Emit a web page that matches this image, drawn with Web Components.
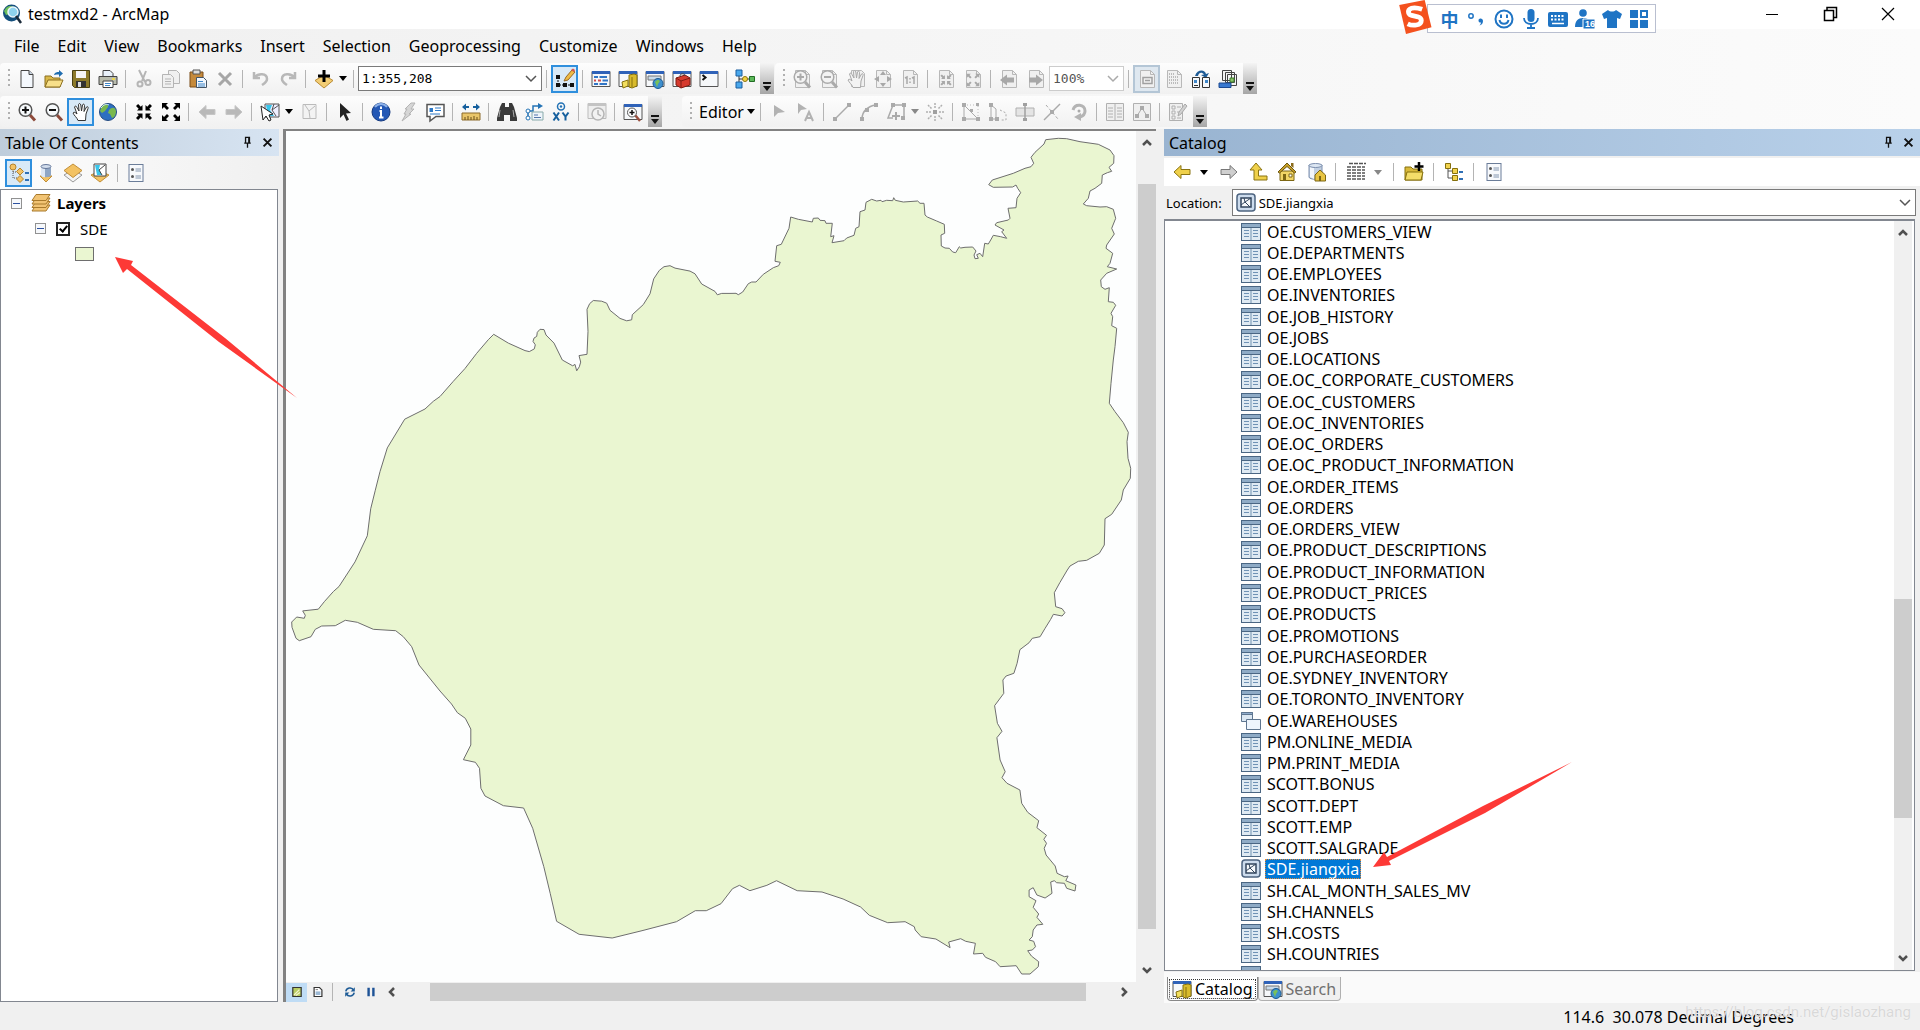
<!DOCTYPE html>
<html lang="en">
<head>
<meta charset="utf-8">
<title>testmxd2 - ArcMap</title>
<style>
  body {
    margin: 0;
    background: #f0f0f0;
    color: #000;
    font: 16px/20px "Noto Sans", "Noto Sans CJK SC", sans-serif;
  }
</style>
</head>
<body>
<am-app></am-app>

<script>
const PAGE = '<path d="M4 1.5h8l4 4v13H4z" fill="#f4f8fd" stroke="#444"/><path d="M12 1.5v4h4" fill="#c8d4e2" stroke="#444"/>';
const GPAGE = '<path d="M3.500 1.500h10l4 4v13h-14z" fill="#f0f0f0" stroke="#b8b8b8"/><path d="M13.500 1.500v4h4" fill="none" stroke="#b8b8b8"/>';
const WINDOW = '<path d="M1 2.500h18v15H1z" fill="#f6f8fa" stroke="#555"/><path d="M1 2h18v3H1z" fill="#2f62b8"/>';
const FORM = '<rect x="3" y="1.500" width="14" height="17" fill="#f7f9fc" stroke="#6b7d99"/><path d="M9.500 6H15M9.500 8H15M9.500 13H15M9.500 15H15" stroke="#8497b0"/><circle cx="6.500" cy="6.500" r="1.500" fill="#555"/><circle cx="6.500" cy="13.500" r="1.500" fill="#555"/>';
const ARROWS_IN = c => `<path fill="${c}" d="M8.500 3v5.500H3l1.700-1.700L2 4.100 4.100 2l2.700 2.700zM11.500 3v5.500H17l-1.700-1.700L18 4.100 15.900 2l-2.700 2.700zM8.500 17v-5.500H3l1.700 1.700L2 15.900 4.100 18l2.700-2.700zM11.500 17v-5.500H17l-1.700 1.700 2.700 2.700-2.100 2.100-2.700-2.700z"/>`;
const ARROWS_OUT = c => `<path fill="${c}" d="M1 1v6l2-2 3 3 2-2-3-3 2-2zM19 1v6l-2-2-3 3-2-2 3-3-2-2zM1 19v-6l2 2 3-3 2 2-3 3 2 2zM19 19v-6l-2 2-3-3-2 2 3 3-2 2z"/>`;
const LENS = (c, f) => `<path d="M13 13l5 5.500" stroke="${c === '#aaa' ? '#aaa' : '#8d4a3a'}" stroke-width="3"/><circle cx="8.500" cy="8" r="6.300" fill="${f}" stroke="${c}" stroke-width="1.500"/>`;
const HAND = (f, s) => `<path d="M7 18.500c-1-3-4-5-5-7.500 1-1.500 2.500-.5 4 1L3.500 5C4 3.500 5.500 4 6 5.500L8 9 7.500 2.500C8 1 9.500 1.500 9.800 3L10.500 9l1-6c.5-1.500 2-1 2 .5L13 9.500 15.500 5c1-1 2 0 1.500 1.500L15 12l-.5 6.500z" fill="${f}" stroke="${s}"/>`;
const LEFT = (f, s) => `<path d="M2 10l7-6.500v4h9v5H9v4z" fill="${f}" stroke="${s}"/>`;
const RIGHT = (f, s) => `<path d="M18 10l-7-6.500v4H2v5h9v4z" fill="${f}" stroke="${s}"/>`;
const CYLINDER = '<path d="M5 3v9c0 3 10 3 10 0V3z" fill="#8fa6c4"/><path d="M5 3v9c0 2 3 2.300 4 2.300V3z" fill="#dfe8f4"/><ellipse cx="10" cy="3.500" rx="5" ry="2" fill="#d3deed" stroke="#66789a"/>';

const ICONS = {
  app: '<circle cx="9.500" cy="9" r="8.500" fill="#144f7c"/><path d="M4 4c3-3 7-2 8 0l-3 2-1 4-4 1-2-4z" fill="#6dbf5a"/><circle cx="11" cy="8" r="5" fill="#8fd3ee" stroke="#eaf5fa" stroke-width="1.500"/><path d="M14 12l5 7" stroke="#1b2b3a" stroke-width="2.500"/>',
  new: PAGE,
  open: '<path d="M1 7h6l2 2h7v9H1z" fill="#d9b849" stroke="#8b6f20"/><path d="M4 11h15l-3 7H1z" fill="#f8e08a" stroke="#8b6f20"/><path d="M10 6c1-3 3-3 5-3V1l4 3.500L15 8V5.500c-2 0-3 0-5 .5z" fill="#1f6db0"/>',
  save: '<path d="M1.500 1.500h17v17h-15l-2-2z" fill="#8c7a2a" stroke="#4a4114"/><path d="M5 2h10v7H5z" fill="#f5f5f5"/><path d="M5 12h10v6H5z" fill="#333"/><path d="M7 13h3v5H7z" fill="#ddd"/>',
  print: '<path d="M5 7V1.500h7l3 3V7" fill="#eaf2fb" stroke="#444"/><path d="M1 7.500h18v8H1z" fill="#b9bcae" stroke="#444"/><path d="M5 12h10v6.500H5z" fill="#fff" stroke="#444"/><path d="M7 14.500h6M7 16.500h5" stroke="#3e86c8"/><path d="M14 9h3v2h-3z" fill="#ecd64f"/>',
  cut: '<g fill="none" stroke="#b5b5b5" stroke-width="2"><path d="M5 1l6 12M12 2L8 12"/><circle cx="6" cy="15" r="2.500"/><circle cx="14" cy="13.500" r="2.500"/></g>',
  copy: '<g fill="#f0f0f0" stroke="#b5b5b5"><path d="M7.500 1.500h8l3 3v10h-11z"/><path d="M1.500 5.500h8l3 3v10h-11z"/><path d="M4 10h6M4 12.500h6M4 15h6"/></g>',
  paste: '<path d="M2 3h13v15H2z" fill="#c58a3c" stroke="#7a4d18"/><path d="M5 1h7v4H5z" fill="#ddd" stroke="#555"/><path d="M8.500 8.500h7l3 3v7h-10z" fill="#f2f7fd" stroke="#456"/><path d="M10 12.500h5M10 15h7M10 17h7" stroke="#3e86c8"/>',
  delete: '<path d="M4 4l12 12M16 4L4 16" stroke="#a6a6a6" stroke-width="3"/>',
  undo: '<path d="M3 3v6h6M3.500 8.500C7 4 16 4 16 10c0 3-2 4-5 6" fill="none" stroke="#b8b8b8" stroke-width="2.500"/>',
  redo: '<path d="M17 3v6h-6M16.500 8.500C13 4 4 4 4 10c0 3 2 4 5 6" fill="none" stroke="#b8b8b8" stroke-width="2.500"/>',
  add: '<path d="M1 11.500L10 6l9 5.500-9 7.500z" fill="#f2cd74" stroke="#ba8b34"/><path d="M10 1v12M4 7h12" stroke="#000" stroke-width="3"/>',
  editor: '<path d="M3 8v8h14" fill="none" stroke="#111" stroke-dasharray="2 1"/><path d="M1 6h4v4H1zM1 14h4v4H1zM8 14h4v4H8zM15 14h4v4h-4z" fill="#111"/><path d="M9 12l2-4 6-7 3 2-7 8z" fill="#eebb45" stroke="#9a6a25"/><path d="M16 1l3 2 1-2-2-1.500z" fill="#d5544f"/>',
  contents: WINDOW + '<path d="M3 8h4M3 15h4" stroke="#3276c6" stroke-width="2"/><path d="M3 11.500h2M7 11.500h3" stroke="#d04a4a" stroke-width="2"/><path d="M8.500 8H16M11.500 11.500H17M8.500 15H16" stroke="#3276c6" stroke-width="2"/>',
  catalog: WINDOW + '<path d="M11 6l5-1 3 1v11l-5 2-3-1z" fill="#d9bb2c" stroke="#85700e"/><path d="M4 13l6-2v6l-5 2z" fill="#f3df5d" stroke="#85700e"/><path d="M14 8v10" stroke="#85700e"/>',
  search: WINDOW + '<path d="M3 7h13v4H3z" fill="#c9dbea" stroke="#777"/><circle cx="13" cy="14.500" r="5" fill="#3d8fce" stroke="#1b5a92"/><path d="M10 13c2-3 4-2 5-1l-2 3-1 3z" fill="#79c15b"/>',
  toolbox: WINDOW + '<path d="M4 9l9-3 5 3v7l-9 3-5-3z" fill="#d63a2d" stroke="#7e1c14"/><path d="M4 9l5 3 9-3M9 12v7" fill="none" stroke="#7e1c14"/><path d="M8 7c0-3 5-3 5 0" fill="none" stroke="#444"/>',
  python: WINDOW + '<path d="M3.500 6l3 2.500-3 2.500" fill="none" stroke="#111" stroke-width="2"/>',
  model: '<path d="M4 4v12M4 10h13" stroke="#333"/><path d="M1 1h6v6H1zM1 13h6v6H1z" fill="#4aa8ec" stroke="#1b5fa0"/><circle cx="10" cy="10" r="2.500" fill="#f3d33f" stroke="#8d7312"/><path d="M14.500 7.500h5v5h-5z" fill="#5cb85a" stroke="#226c24"/>',
  zoomin: LENS('#555', '#f7fafc') + '<path d="M8.500 4.500v7M5 8h7" stroke="#111" stroke-width="2"/>',
  zoomout: LENS('#555', '#f7fafc') + '<path d="M5 8h7" stroke="#111" stroke-width="2"/>',
  hand: HAND('#fff', '#333'),
  globe: '<circle cx="10" cy="10" r="8.500" fill="#2d6fc0" stroke="#234a80"/><path d="M4 4c3-3 7-2 6 1L7 9l-3 2-2-2zM11 8c3-3 6-3 7 1 0 4-2 7-4 7l-2-4-2-1z" fill="#79b84e"/><path d="M3 6c3-4 6-4 8-3" stroke="#d7ecff" fill="none"/>',
  fixedin: ARROWS_IN('#000'),
  fixedout: ARROWS_OUT('#000'),
  prev: LEFT('#b9b9b9', '#c6c6c6'),
  next: RIGHT('#b9b9b9', '#c6c6c6'),
  selectf: '<path d="M5 2h14v13H5z" fill="#eef" stroke="#555"/><path d="M6 3h6l-2 5 4 6H8z" fill="#39c5ea"/><path d="M19 3l-7 5 4 6M14 2l-2 6" fill="none" stroke="#555"/><path d="M1 4l2 14 3-4 3 5 2-1-2-5 4-1z" fill="#fff" stroke="#222"/>',
  clear: '<path d="M4 2.500h13v14H4z" fill="#f3f3f3" stroke="#bbb"/><path d="M6 3l4 6 6-5M10 9l1 7" fill="none" stroke="#bbb"/>',
  pointer: '<path d="M5 1l11 10-5 .5 3 6-2.500 1.500-3-6.500L5 16z" fill="#222"/>',
  info: '<circle cx="10" cy="10" r="9" fill="#2458b5" stroke="#153a80"/><path d="M4 5c3-4 9-4 12 0" stroke="#8db1e8" stroke-width="2" fill="none"/><path d="M10 4.500v2.500M8.500 9H10v6M8 15.500h4.500" stroke="#fff" stroke-width="2" fill="none"/>',
  bolt: '<path d="M13 1h4l-4 6h3l-5 5h2L4 19l4-7H6l3-5H7z" fill="#d6d6d6" stroke="#b4b4b4"/>',
  popup: '<path d="M2 2.500h17v12h-8L5 19v-4.500H2z" fill="#fff" stroke="#555" stroke-width="1.500"/><path d="M4.500 6H8v4H4.500z" fill="#2f7ac8"/><path d="M10 6h6M10 8.500h6M5 12h10" stroke="#2f7ac8"/>',
  measure: '<path d="M1 5l4-3.500v2.500h3v2H5v2.500zM19 5l-4-3.500v2.500h-3v2h3v2.500z" fill="#16609e"/><path d="M1 11h18v7H1z" fill="#e9c56a" stroke="#8c6a2a"/><path d="M4 15v3M7 14v4M10 15v3M13 14v4M16 15v3" stroke="#6b4f18"/>',
  find: '<path d="M3 5l2-4h3v4h4V1h3l2 4 3 11v3h-7v-6H7v6H0v-3z" fill="#3a3a3a"/><path d="M3 8l-1 7M16 8l1 7" stroke="#aaa"/>',
  route: '<path d="M4 16V9h5V4h6" fill="none" stroke="#2473b5" stroke-width="1.500"/><path d="M14 1l5 3-5 3z" fill="#2473b5"/><circle cx="4" cy="9" r="2" fill="#fff" stroke="#2473b5"/><circle cx="4" cy="16" r="2" fill="#fff" stroke="#2473b5"/><path d="M8 10h11v8H8z" fill="#eef4fa" stroke="#8aa"/><path d="M10 13h4M10 15.500h7" stroke="#57a"/>',
  xy: '<circle cx="10" cy="4.500" r="3.500" fill="none" stroke="#2473b5" stroke-width="1.500"/><circle cx="10" cy="4.500" r="1.200" fill="#2473b5"/><path d="M2.500 10.500l5.500 8M8 10.500l-5.500 8M11.500 10.500l3 4 3-4M14.500 14.500v4" fill="none" stroke="#16609e" stroke-width="2"/>',
  time: '<path d="M1 1.500h18v15H1z" fill="#eee" stroke="#bbb"/><path d="M1 1h18v3H1z" fill="#c4c4c4"/><circle cx="11" cy="12" r="6" fill="#f2f2f2" stroke="#b5b5b5" stroke-width="1.500"/><path d="M11 8v4l3 2" fill="none" stroke="#b5b5b5" stroke-width="1.500"/>',
  viewer: WINDOW + '<path d="M12 13l5 6" stroke="#9a5140" stroke-width="2.500"/><circle cx="9" cy="10.500" r="4.500" fill="#fff" stroke="#555"/><path d="M9 8v5M6.500 10.500h5" stroke="#111" stroke-width="1.500"/>',
  gzoomin: GPAGE + LENS('#aaa', '#f3f3f3') + '<path d="M8.500 4.500v7M5 8h7" stroke="#aaa" stroke-width="2"/>',
  gzoomout: GPAGE + LENS('#aaa', '#f3f3f3') + '<path d="M5 8h7" stroke="#aaa" stroke-width="2"/>',
  ghand: '<path d="M5.500 1.500h10l3 3v13h-13z" fill="#f0f0f0" stroke="#b8b8b8"/>' + HAND('#f3f3f3', '#a8a8a8'),
  gfull: GPAGE + '<path d="M10 2l3 4H7zM10 18l3-4H7zM1 10l5-3v6zM19 10l-5-3v6z" fill="#a8a8a8"/>',
  gone: GPAGE + '<path d="M5 9l2-1v7M12 9l2-1v7M10 9v1.500M10 12.500V14" fill="none" stroke="#a8a8a8" stroke-width="1.500"/>',
  gin: GPAGE + '<g transform="translate(3 4) scale(.7)">' + ARROWS_IN('#a8a8a8') + '</g>',
  gout: GPAGE + '<g transform="translate(3 4) scale(.7)">' + ARROWS_OUT('#a8a8a8') + '</g>',
  gprev: GPAGE + '<path d="M1 11l7-5.500v3h7v5H8v3z" fill="#a8a8a8"/>',
  gnext: GPAGE + '<path d="M17 11l-7-5.500v3H3v5h7v3z" fill="#a8a8a8"/>',
  draft: GPAGE + '<path d="M6 8.500h9v6H6zM8 11.500h5" fill="none" stroke="#a0a0a0" stroke-width="1.500"/>',
  focus: GPAGE + '<path d="M5 5h6M5 8h9M5 11h10M5 14h9" stroke="#bbb" stroke-width="2" stroke-dasharray="1 1"/>',
  layout: '<path d="M4 7C6 0 14 0 15 5l3-1-3 5-5-3 3-.5C11 3 8 3 7 7z" fill="#1d5b96"/><path d="M1.500 8.500h7v10h-7zM11.500 8.500h7v10h-7z" fill="#f4f8fc" stroke="#333"/><path d="M3 11h3v3H3zM14 11h3v3h-3z" fill="#3e86c8"/><path d="M3 16.500h4" stroke="#333"/>',
  pages: '<path d="M4.500 1.500h9v10h-9zM7.500 3.500h9v10h-9zM9.500 5.500h9v11h-9z" fill="#f4f4f4" stroke="#444"/><path d="M12 9h4v4h-4z" fill="#8bc46a" stroke="#3a7a2a"/><path d="M1 14h12v4.500H1z" fill="#3979d0" stroke="#1c4a92"/>',
  edit: '<path d="M5 3l11 7-7 1-4 4z" fill="#b2b2b2"/>',
  annot: '<path d="M2 1l9 6-6 1-3 4z" fill="#b2b2b2"/><path d="M9 19l4-9 4 9M10.500 16h5" fill="none" stroke="#b2b2b2" stroke-width="2"/>',
  line: '<path d="M3 17L17 3" stroke="#aaa" stroke-width="1.500"/><path d="M1 15h4v4H1zM15 1h4v4h-4z" fill="#aaa"/>',
  arc: '<path d="M3 17C3 9 9 4 17 3" fill="none" stroke="#aaa" stroke-width="1.500"/><path d="M1 15h4v4H1zM6 6h4v4H6zM15 1h4v4h-4z" fill="#aaa"/>',
  trace: '<path d="M7 3h11v13M7 3L2 16h5" fill="none" stroke="#aaa" stroke-width="1.500"/><path d="M5 1h4v4H5zM16 1h4v4h-4zM15 14h4v4h-4z" fill="#aaa"/><path d="M10 10v8M6 14h8" stroke="#aaa" stroke-width="2"/>',
  point: '<path d="M10 1v5M10 14v5M1 10h5M14 10h5M3 3l4 4M17 3l-4 4M3 17l4-4M17 17l-4-4" stroke="#b0b0b0" stroke-width="1.500" stroke-dasharray="2 1"/><path d="M8 8h4v4H8z" fill="#a0a0a0"/>',
  vertices: '<path d="M3 3v14h14zM3 3l14 14" fill="none" stroke="#aaa"/><path d="M3 3h14v14" fill="none" stroke="#bbb" stroke-dasharray="1 2"/><path d="M1 1h4v4H1zM1 15h4v4H1zM15 15h4v4h-4zM15 1h3v3h-3zM9 7h3v3H9z" fill="#aaa"/>',
  reshape: '<path d="M3 3v14h5V7z" fill="none" stroke="#aaa"/><path d="M3 3h4M12 8l6 3v7h-6" fill="none" stroke="#aaa" stroke-dasharray="2 2"/><path d="M1 1h4v4H1zM1 15h4v4H1zM7 15h4v4H7z" fill="#aaa"/>',
  cutpoly: '<path d="M1 6h18v8H1z" fill="#e4e4e4" stroke="#b0b0b0"/><path d="M10 1v18" stroke="#a0a0a0" stroke-width="1.500"/><path d="M8 1h4v3H8zM8 16h4v3H8z" fill="#a0a0a0"/>',
  split: '<path d="M2 18L18 2" stroke="#aaa" stroke-width="1.500"/><path d="M4 3l12 14" stroke="#aaa" stroke-dasharray="3 2"/><path d="M8 8h4v4H8z" fill="#aaa"/>',
  rotate: '<path d="M4 8c2-7 12-6 12 1 0 3-2 5-5 6" fill="none" stroke="#b4b4b4" stroke-width="3"/><path d="M5 15l7-4v8z" fill="#b4b4b4"/><circle cx="10" cy="9" r="1.500" fill="#aaa"/>',
  attrs: '<path d="M1.500 1.500h17v17h-17zM10 2v17" fill="#efefef" stroke="#b0b0b0"/><path d="M3 6h5M3 9h5M3 12h5M3 15h5M12 6h5M12 9h5M12 12h5M12 15h5" stroke="#b0b0b0"/>',
  sketch: '<path d="M1.500 1.500h17v17h-17z" fill="#efefef" stroke="#b0b0b0"/><path d="M5 14l5-8 5 8" fill="none" stroke="#aaa"/><path d="M3 12h4v4H3zM8 4h4v4H8zM13 12h4v4h-4z" fill="#aaa"/>',
  create: '<path d="M1.500 1.500h13v17h-13z" fill="#efefef" stroke="#b0b0b0"/><path d="M4 4h3v3H4zM4 9h3v3H4zM4 14h3v3H4zM9 5h4M9 10h3M9 16h4" fill="none" stroke="#b0b0b0"/><path d="M10 14l1-4 6-8 2 2-6 8z" fill="#d2d2d2" stroke="#aaa"/>',
  drawing: '<path d="M4 4v11h8M4 9h7" fill="none" stroke="#555" stroke-dasharray="1 1"/><g fill="#f3c263" stroke="#b58430"><circle cx="4" cy="4" r="3"/><path d="M11 5l3.500 3.500L11 12 7.500 8.500zM11 12.500l3.500 3.500-3.500 3.500-3.500-3.500z"/></g><path d="M16 10h4M16 17h4" stroke="#2f6fb5" stroke-width="2"/>',
  source: '<path d="M4 13l6 6 6-6z" fill="#f3c263" stroke="#c28f38"/>' + CYLINDER,
  visible: '<path d="M1 12l9-5 9 5-9 7z" fill="#f4f4f4" stroke="#999"/><path d="M1 7.500L10 1l9 6.500-9 7z" fill="#f3c263" stroke="#c28f38"/>',
  selection: '<path d="M1 12l9-4 9 4-9 7z" fill="#f3c263" stroke="#c28f38"/><path d="M4 1h12v12H4z" fill="#fff" stroke="#444"/><path d="M5 2h5l-1 4 3 6H7z" fill="#39c5ea"/><path d="M15 2l-6 5 3 5" fill="none" stroke="#444"/>',
  options: FORM,
  layers: '<g fill="#f1c373" stroke="#a97a2c"><path d="M5 12h14l-4 6H1z"/><path d="M5 8.500h14l-4 6H1z"/><path d="M5 5h14l-4 6H1z"/><path d="M5 1.500h14l-4 6H1z"/></g>',
  back: LEFT('#efd04a', '#8a7412'),
  forward: RIGHT('#cfcfcf', '#777'),
  up: '<path d="M8 1l6 7h-3.500v6H19v4H6V8H2z" fill="#efd04a" stroke="#8a7412"/>',
  home: '<path d="M3 9h14v9.500H3z" fill="#f1d566" stroke="#7d6714"/><path d="M10 1l9 9-1.500 1L10 4.500 2.500 11 1 10z" fill="#c59e27" stroke="#6d5710"/><path d="M14 1h2.500v5L14 4z" fill="#8a6a1a"/><path d="M6 12h3v6H6z" fill="#7d6714"/><path d="M12 12h3v3h-3z" fill="#fff" stroke="#7d6714"/>',
  dbhome: '<path d="M3 3v12c0 3 13 3 13 0V3z" fill="#c2d0e2" stroke="#7c8fae"/><path d="M4 4v11l4 2V4z" fill="#f2f6fb"/><ellipse cx="9.500" cy="3.500" rx="6.500" ry="2" fill="#dce6f2" stroke="#7c8fae"/><path d="M9 13l5-5 5.500 5v6H9z" fill="#e8c442" stroke="#7d6714"/><path d="M13 14h2v5h-2z" fill="#7d6714"/>',
  details: '<path d="M3 1.500h17M1 5h18M1 8h18M1 11h18M1 14h18M1 17h18" stroke="#555" stroke-width="1.500" stroke-dasharray="4 1"/>',
  connect: '<path d="M1 5h6l2 2h9v11H1z" fill="#d9b93a" stroke="#85700e"/><path d="M3 10h16l-2 8H1z" fill="#f4dd69" stroke="#85700e"/><path d="M15 0v9M10.500 4.500h9" stroke="#000" stroke-width="2.500"/>',
  tree: '<path d="M4 4v12h5M4 9h5" fill="none" stroke="#555"/><path d="M1.500 1.500h5v5h-5zM8.500 6.500h5v5h-5zM8.500 13.500h5v5h-5z" fill="#f2d34e" stroke="#85700e"/><path d="M15 10h4M15 17h4" stroke="#2f6fb5" stroke-width="2"/>',
  table: '<rect x="0" y="1" width="20" height="18" fill="#4a6683"/><path d="M1 2h18v3H1z" fill="#8fabc6"/><path d="M1 6h18v12H1z" fill="#dfeaf3"/><path d="M10 6v12" stroke="#a9bfd2" stroke-width="2"/><path d="M3 8.500h5M3 11.500h5M3 14.500h5M12 8.500h5M12 11.500h5M12 14.500h5" stroke="#6f92b5"/>',
  view: '<g stroke="#5f7690"><path d="M.5 1.500h11v9H.5z" fill="#dce8f3"/><path d="M.5 1.500h11v2H.5z" fill="#8faccc"/><path d="M5.500 8.500h14v10h-14z" fill="#eef5fd"/></g>',
  feature: '<rect x="1" y="1" width="18" height="17" rx="3" fill="#cddced" stroke="#4d6480" stroke-width="1.500"/><path d="M5 5h10v9H5z" fill="#f7fafc" stroke="#33465e" stroke-width="1.500"/><path d="M5 12l4-3 6-4M9 9l5 5M8 5l1 4" fill="none" stroke="#33465e"/>',
  dataview: '<path d="M3 2.500h14v15H3z" fill="#b8cc62" stroke="#333" stroke-width="2"/><path d="M5 15l9-9M8 16l7-5" stroke="#f4f4d0" stroke-width="2"/>',
  pageview: '<path d="M3.500 2.500h9l4 4v11h-13z" fill="#fff" stroke="#333" stroke-width="2"/><path d="M6 9h8v6H6z" fill="#9bb8d4"/><path d="M6 6h4" stroke="#333"/>',
  refresh: '<g fill="none" stroke="#1d5b96" stroke-width="2.500"><path d="M3 9c1-6 10-8 13-2M17 11c-1 6-10 8-13 2"/></g><path d="M18 2v7h-7zM2 18v-7h7z" fill="#1d5b96"/>',
  pause: '<path d="M4 3h4v14H4zM12 3h4v14h-4z" fill="#1d5296"/>',
  pin: '<path d="M7 2h6v9H7zM5 11h10M10 11v7M12 2v9" fill="none" stroke="#111" stroke-width="2"/>',
  close: '<path d="M4 4l12 12M16 4L4 16" stroke="#111" stroke-width="3"/>',
  winmin: '<path d="M4 10.500h12" stroke="#000"/>',
  winmax: '<path d="M4.500 6.500h9v10h-9zM7 6V3.500h9.500v10H14" fill="none" stroke="#000" stroke-width="1.500"/>',
  winclose: '<path d="M4 4l12 12M16 4L4 16" stroke="#000" stroke-width="1.200"/>',
  sogou: '<path d="M1 3L16 0l4 16-15 4z" fill="#f4511e"/><path d="M14.500 5.500C9 3.500 6 5 6.500 7.500 7 10.500 14 8.500 14 12c0 3-5 3.500-8 2" fill="none" stroke="#fff" stroke-width="2.800"/>',
  punct: '<circle cx="4" cy="7" r="2.200" fill="none" stroke="currentColor" stroke-width="1.500"/><path d="M13 9.500a2.500 2.500 0 0 1 3 2.500c0 3-2 4-3.500 4.500 1-1 1.500-2 1.500-3a2 2 0 0 1-1-4z" fill="currentColor"/>',
  smile: '<circle cx="10" cy="10" r="8.500" fill="none" stroke="currentColor" stroke-width="2"/><path d="M7 5.500V9M13 5.500V9M5.500 11c1 5 8 5 9 0" fill="none" stroke="currentColor" stroke-width="2"/>',
  mic: '<rect x="6.500" y="0" width="7" height="13" rx="3.500" fill="currentColor"/><path d="M3 9c0 8 14 8 14 0M10 15v4M6 19h8" fill="none" stroke="currentColor" stroke-width="1.800"/>',
  keyboard: '<rect x="0" y="3" width="20" height="15" rx="2" fill="currentColor"/><path d="M3 7h14M3 10.500h14" stroke="#fff" stroke-width="1.800" stroke-dasharray="2 1.500"/><path d="M4 14.500h12" stroke="#fff" stroke-width="1.500"/>',
  person: '<circle cx="8" cy="4" r="3.800" fill="currentColor"/><path d="M0 18c0-6 3-9 8-9s6 2 7 4v5z" fill="currentColor"/><path d="M8 10h12v10H8z" fill="currentColor" stroke="#fff"/>',
  shirt: '<path d="M6 1c2 2 6 2 8 0l6 4-2 5-3-1v10H5V9L2 10 0 5z" fill="currentColor"/>',
  apps: '<path d="M1 1h8v8H1zM1 11h8v8H1zM11 11h8v8h-8z" fill="currentColor"/><path d="M12 2h6v6h-6z" fill="none" stroke="currentColor" stroke-width="2"/>',
};

class AmElement extends HTMLElement {
  constructor() {
    super();
    this.attachShadow({ mode: 'open' });
  }

  connectedCallback() {
    this.shadowRoot.innerHTML = this.template();
  }
}

class AmIcon extends AmElement {
  template() {
    return `
      <style>
        :host { display: block; width: 20px; height: 20px; flex: none; }
        svg { display: block; width: 100%; height: 100%; overflow: visible; }
      </style>
      <svg viewBox="0 0 20 20" fill="none" aria-hidden="true">${ICONS[this.getAttribute('name')]}</svg>
    `;
  }
}
customElements.define('am-icon', AmIcon);

class AmTool extends AmElement {
  template() {
    const caret = this.hasAttribute('caret');
    return `
      <style>
        :host { display: flex; flex: none; }
        button {
          display: flex; align-items: center; justify-content: center;
          box-sizing: border-box; width: 27px; height: 28px; padding: 0;
          border: 1px solid transparent; background: none; color: inherit; font: inherit;
        }
        :host([pressed]) button:first-of-type { border: 2px solid #2f8fdd; background: #d8e9f7; }
        :host([draft]) button:first-of-type { border: 2px solid #b4c6d6; background: #dfe8f0; }
        .caret { width: var(--caret-width, 12px); }
        .caret::after {
          content: ""; border: 5px solid transparent; border-top-color: #000;
          border-bottom: 0; border-left-width: 4px; border-right-width: 4px;
        }
        :host([dim]) .caret::after { border-top-color: #888; }
      </style>
      <button aria-label="${this.getAttribute('label')}"><am-icon name="${this.getAttribute('icon')}"></am-icon></button>
      ${caret ? `<button class="caret" aria-label="${this.getAttribute('label')} menu"></button>` : ''}
    `;
  }
}
customElements.define('am-tool', AmTool);

class AmSep extends AmElement {
  template() {
    return `
      <style>
        :host { display: block; flex: none; width: 1px; height: 18px; margin: 0 4px; background: #b4b4b4; }
      </style>
    `;
  }
}
customElements.define('am-sep', AmSep);

class AmToolbar extends AmElement {
  template() {
    return `
      <style>
        :host { display: flex; align-items: stretch; height: 31px; }
        .body {
          display: flex; align-items: center; padding: 0 2px 0 8px;
          border-radius: 4px 0 0 4px; background: linear-gradient(#fdfdfd, #f1f1f1);
        }
        .grip { width: 2px; height: 20px; margin-right: 3px; background: repeating-linear-gradient(#b0b0b0 0 2px, transparent 2px 5px); }
        .more {
          display: flex; flex-direction: column; align-items: center; justify-content: flex-end; gap: 2px;
          width: 14px; padding: 0 0 3px; border: 0; background: linear-gradient(#f4f4f4, #a6a6a6);
        }
        .more::before { content: ""; width: 8px; height: 2px; background: #111; }
        .more::after { content: ""; border: 4px solid transparent; border-top: 5px solid #111; border-bottom: 0; }
      </style>
      <div class="body" role="toolbar"><span class="grip"></span><slot></slot></div>
      <button class="more" aria-label="Toolbar options"></button>
    `;
  }
}
customElements.define('am-toolbar', AmToolbar);

class AmCombo extends AmElement {
  template() {
    return `
      <style>
        :host { display: flex; position: relative; align-items: center; box-sizing: border-box; height: 25px; border: 1px solid #7a7a7a; background: #fff; }
        :host([dim]) { border-color: #ccc; color: #555; }
        select {
          appearance: none; flex: 1; min-width: 0; height: 100%; padding: 0 26px 0 3px;
          border: 0; border-radius: 0; background: none; color: inherit; font: inherit;
        }
        svg { position: absolute; right: 4px; top: 50%; width: 12px; height: 8px; margin-top: -4px; pointer-events: none; }
      </style>
      <slot></slot>
      <select aria-label="${this.getAttribute('label')}"><option>${this.getAttribute('value')}</option></select>
      <svg viewBox="0 0 12 8"><path d="M1 1l5 5 5-5" fill="none" stroke="${this.hasAttribute('dim') ? '#aaa' : '#555'}" stroke-width="1.500"/></svg>
    `;
  }
}
customElements.define('am-combo', AmCombo);

class AmPanel extends AmElement {
  template() {
    return `
      <style>
        :host { display: flex; flex-direction: column; min-width: 0; min-height: 0; }
        header {
          display: flex; align-items: center; height: 27px; padding: 0 1px 0 5px;
          background: linear-gradient(90deg, #bfcddb, #d7e4f2);
        }
        :host([active]) header { background: linear-gradient(90deg, #99b4d1, #b9d1ea); }
        h2 { flex: 1; margin: 0; font-size: 16px; font-weight: 400; }
        button { width: 20px; padding: 0 3px; border: 0; background: none; }
        am-icon { width: 13px; height: 13px; }
      </style>
      <header>
        <h2>${this.getAttribute('heading')}</h2>
        <button aria-label="Auto hide"><am-icon name="pin"></am-icon></button>
        <button aria-label="Close"><am-icon name="close"></am-icon></button>
      </header>
      <slot></slot>
    `;
  }
}
customElements.define('am-panel', AmPanel);

// from / to place the thumb, in percent of the space between the two arrows
class AmScrollbar extends AmElement {
  template() {
    const from = Number(this.getAttribute('from'));
    const to = Number(this.getAttribute('to'));
    const across = this.hasAttribute('horizontal');
    const arrow = d => `<svg viewBox="0 0 18 18"><path d="${d}" fill="none" stroke="#505050" stroke-width="2.500"/></svg>`;
    return `
      <style>
        :host { display: flex; flex: none; flex-direction: column; box-sizing: border-box; width: 18px; padding: 3px 0; background: #f0f0f0; }
        :host([horizontal]) { flex: 1; flex-direction: row; width: auto; height: 18px; padding: 0 2px; }
        button { flex: none; width: 18px; height: 18px; padding: 0; border: 0; background: none; }
        svg { display: block; width: 18px; height: 18px; }
        .track { display: flex; flex: 1; flex-direction: inherit; }
        .before { flex: ${from}; }
        .thumb { flex: ${to - from}; background: #cdcdcd; }
        .after { flex: ${100 - to}; }
      </style>
      <button aria-label="Back">${arrow(across ? 'M11 5L7 9l4 4' : 'M5 11l4-4 4 4')}</button>
      <div class="track"><span class="before"></span><span class="thumb"></span><span class="after"></span></div>
      <button aria-label="Forward">${arrow(across ? 'M7 5l4 4-4 4' : 'M5 7l4 4 4-4')}</button>
    `;
  }
}
customElements.define('am-scrollbar', AmScrollbar);

class AmTitlebar extends AmElement {
  template() {
    return `
      <style>
        :host { display: flex; align-items: center; box-sizing: border-box; height: 29px; padding: 0 0 1px 2px; background: #fff; }
        h1 { flex: 1; margin: 0 0 0 6px; font-size: 16px; font-weight: 400; }
        button { display: flex; justify-content: center; width: 58px; padding: 0; border: 0; background: none; }
        nav { display: flex; padding-right: 3px; }
      </style>
      <am-icon name="app"></am-icon>
      <h1>testmxd2 - ArcMap</h1>
      <nav>
        <button aria-label="Minimize"><am-icon name="winmin"></am-icon></button>
        <button aria-label="Restore"><am-icon name="winmax"></am-icon></button>
        <button aria-label="Close"><am-icon name="winclose"></am-icon></button>
      </nav>
    `;
  }
}
customElements.define('am-titlebar', AmTitlebar);

class AmIme extends AmElement {
  template() {
    const keys = ['punct', 'smile', 'mic', 'keyboard', 'person', 'shirt', 'apps'];
    return `
      <style>
        :host { display: flex; position: absolute; top: 0; right: 264px; color: #1f74c4; }
        .logo { position: relative; width: 35px; height: 34px; margin-right: -5px; }
        .bar { display: flex; align-items: center; margin-top: 4px; padding: 0 3px 0 8px; height: 27px; border: 1px solid #b9bfd0; background: #fff; }
        button { display: flex; position: relative; align-items: center; justify-content: center; width: 27px; padding: 0; border: 0; background: none; color: inherit; font: bold 18px/24px "Noto Sans CJK SC", sans-serif; }
        small { position: absolute; right: 3px; bottom: 0; color: #fff; font: bold 9px/9px "Liberation Sans", sans-serif; }
      </style>
      <am-icon class="logo" name="sogou"></am-icon>
      <div class="bar">
        <button>中</button>
        ${keys.map(k => `<button aria-label="${k}"><am-icon name="${k}"></am-icon>${k === 'person' ? '<small>16</small>' : ''}</button>`).join('')}
      </div>
    `;
  }
}
customElements.define('am-ime', AmIme);

class AmMenubar extends AmElement {
  template() {
    const items = ['File', 'Edit', 'View', 'Bookmarks', 'Insert', 'Selection', 'Geoprocessing', 'Customize', 'Windows', 'Help'];
    return `
      <style>
        :host { display: flex; gap: 18px; align-items: center; box-sizing: border-box; height: 34px; padding: 0 14px; }
        button { padding: 0; border: 0; background: none; color: inherit; font: inherit; }
      </style>
      ${items.map(i => `<button>${i}</button>`).join('')}
    `;
  }
}
customElements.define('am-menubar', AmMenubar);

const tools = names => names.split(' ').map(n => {
  if (n === '|') return '<am-sep></am-sep>';
  const [icon, ...flags] = n.split(':');
  return `<am-tool icon="${icon}" label="${icon}" ${flags.join(' ')}></am-tool>`;
}).join('');

class AmToolbars extends AmElement {
  template() {
    return `
      <style>
        :host { display: flex; flex-direction: column; gap: 2px; padding-bottom: 2px; }
        .row { display: flex; }
        am-combo { font: 13px "DejaVu Sans Mono", monospace; }
        .scale { width: 184px; }
        .percent { width: 75px; }
        .layout { margin-left: 1px; }
        .edit { margin-left: 20px; }
        .menu { display: flex; align-items: center; gap: 3px; width: 61px; padding: 0 0 0 4px; border: 0; background: none; color: inherit; font: inherit; }
        .menu::after { content: ""; border: 4px solid transparent; border-top: 5px solid #000; border-bottom: 0; }
      </style>
      <div class="row">
        <am-toolbar>
          ${tools('new open save print | cut copy paste delete | undo redo | add:caret |')}
          <am-combo class="scale" label="Map scale" value="1:355,208"></am-combo>
          ${tools('| editor:pressed | contents catalog search toolbox python | model')}
        </am-toolbar>
        <am-toolbar class="layout">
          ${tools('gzoomin gzoomout ghand gfull gone | gin gout | gprev gnext')}
          <am-combo class="percent" dim label="Page zoom" value="100%"></am-combo>
          ${tools('| draft:draft focus layout pages')}
        </am-toolbar>
      </div>
      <div class="row">
        <am-toolbar>
          ${tools('zoomin zoomout hand:pressed globe | fixedin fixedout | prev next | selectf:caret clear | pointer | info bolt popup | measure | find route xy | time | viewer')}
        </am-toolbar>
        <am-toolbar class="edit">
          <button class="menu">Editor</button>
          ${tools('| edit annot | line arc trace:caret:dim point | vertices reshape cutpoly split rotate | attrs sketch | create')}
        </am-toolbar>
      </div>
    `;
  }
}
customElements.define('am-toolbars', AmToolbars);

class AmContents extends AmElement {
  template() {
    return `
      <style>
        :host { display: flex; flex: 1; flex-direction: column; min-height: 0; }
        .tools { display: flex; align-items: center; height: 33px; padding-left: 5px; background: linear-gradient(90deg, #fdfdfd, #f0f0f0); }
        .tree { flex: 1; margin: 0 1px 1px 0; padding: 0 10px; border: 1px solid #828790; background: #fff; font-size: 15px; }
        .item { display: flex; align-items: center; height: 26px; }
        .sub { height: 25px; padding-left: 24px; }
        .symbol { width: 17px; height: 12px; margin-left: 64px; border: 1px solid #6e6e6e; background: #eaf6d1; }
        .fold { position: relative; width: 11px; height: 11px; padding: 0; border: 1px solid #919191; background: #f6f8fb; }
        .fold::after { content: ""; display: block; height: 1px; margin: 0 1px; background: #2b50a0; }
        am-icon { margin: 0 6px 0 9px; }
        label { display: flex; align-items: center; gap: 10px; margin-left: 10px; }
        input { appearance: none; width: 14px; height: 14px; margin: 0; border: 2px solid #222; background: #fff; }
        input:checked::after { content: ""; display: block; width: 3px; height: 6px; margin: 0 0 0 3px; border: solid #000; border-width: 0 2px 2px 0; transform: rotate(40deg); }
      </style>
      <div class="tools">${tools('drawing:pressed source visible selection | options')}</div>
      <div class="tree" role="tree">
        <div class="item"><button class="fold" aria-label="Collapse Layers"></button><am-icon name="layers"></am-icon><b>Layers</b></div>
        <div class="item sub"><button class="fold" aria-label="Collapse SDE"></button><label><input type="checkbox" checked>SDE</label></div>
        <div class="item"><span class="symbol"></span></div>
      </div>
    `;
  }
}
customElements.define('am-contents', AmContents);

// Boundary of the layer, clockwise from the western tip. Each sheet has its own origin and scale.
const SHEETS = [
  { x: -6, y: -11, sx: 3, sy: 2.958, pts: '35,1485 50,1470 73,1474 76,1465 68,1452 115,1447 133,1425 160,1395 177,1380 225,1307 262,1230 272,1150 286,1095 300,1040 322,970 374,885 435,855 460,832 480,818 520,773 555,735 590,690 625,650 641,634 685,660 735,682 748,685 763,677 766,665 759,655 762,645 770,640 772,628 780,619 792,620 798,636 822,660 847,710 878,727 885,723 890,742 898,730 902,716 897,697 921,693 924,625 921,560 929,543 940,534 965,536 980,542 990,563 1020,587 1040,594 1055,591 1057,576 1090,546 1110,514 1121,470 1138,445 1152,434 1170,431 1185,438 1230,447 1245,455 1265,485 1305,507 1312,517 1325,513 1350,513' },
  { x: 444, y: -11, sx: 3, sy: 3, pts: '18,520 25,524 38,516 55,491 65,486 78,486 100,463 130,443 146,437 151,427 135,424 140,377 154,373 177,325 182,291 205,298 247,306 250,295 265,294 270,301 285,302 288,310 307,310 302,350 312,347 306,368 342,362 350,354 372,346 377,325 387,320 390,275 405,270 408,247 425,238 440,243 453,241 456,245 470,241 488,242 491,233 496,241 520,246 563,243 570,250 582,250 585,285 592,291 620,303 643,313 644,340 633,345 634,378 645,384 658,385 668,396 677,398 688,380 692,384 705,382 728,381 738,393 732,405 735,416 745,415 740,404 750,400 758,410 764,370 775,372 782,360 790,346 812,350 830,355 815,335 822,330 795,315 800,308 835,300 840,295 834,265 858,263 861,235 872,218 863,205 858,195 848,201 790,202 776,194 787,180 850,160 885,145 903,140 911,130 903,112 915,97 942,72 947,59 985,55 1010,56 1050,65 1105,73 1140,90 1152,107 1151,130 1137,142 1145,154 1132,158 1117,165 1115,190 1095,205 1080,213 1075,235 1060,252 1070,257 1110,261 1130,260 1150,268 1157,295 1145,325 1153,342 1130,375 1128,385 1148,400 1140,430 1132,440 1160,447 1130,460 1112,480 1114,500 1125,508 1138,503 1135,545 1150,547 1157,556 1143,580 1148,590 1145,617 1160,625 1155,680 1150,720 1143,790 1138,850 1155,875 1180,908 1195,937 1191,965 1194,1015 1202,1045 1201,1075 1180,1110 1174,1140 1145,1183 1125,1196 1123,1275 1108,1300 1070,1321 1045,1324 1020,1338 1012,1350' },
  { x: 154, y: 429, sx: 2.178, sy: 3, pts: '1350,68 1338,98 1341,140 1355,146 1361,158 1355,168 1336,163 1330,178 1318,205 1307,230 1290,235 1283,248 1263,269 1257,310 1250,340 1233,348 1226,360 1228,400 1208,437 1214,490 1224,514 1213,533 1220,600 1231,635 1224,653 1235,670 1263,690 1267,730 1280,757 1304,782 1300,803 1321,826 1315,838 1321,850 1316,865 1320,885 1340,918 1344,940 1360,950 1368,948 1363,962 1385,975 1383,993 1365,985 1360,970 1343,968 1338,962 1330,966 1333,1000 1318,1014 1300,1005 1292,983 1283,990 1283,1010 1298,1022 1292,1042 1304,1062 1300,1072 1305,1080 1313,1093 1300,1095 1292,1110 1290,1130 1283,1140 1293,1144 1297,1160 1290,1170 1280,1172 1288,1188 1304,1205 1303,1220 1285,1242 1267,1242 1255,1217 1220,1220 1210,1205 1188,1192 1182,1180 1162,1182 1166,1150 1145,1144 1134,1136 1108,1146 1111,1163 1080,1137 1048,1130 1035,1110 1033,1100 1013,1085 975,1088 935,1066 916,1041 878,1017 832,996 778,992 733,962 712,976 675,992 652,976 637,986 612,1031 580,1052 556,1052 515,1085 440,1112 375,1134 303,1123 254,1084 240,1000 226,920 202,805 182,744 138,737 98,708 89,685 86,625 77,607 51,599 67,555 67,507 55,475 38,458 25,432 0,393' },
  { x: -286, y: 439, sx: 3, sy: 3, pts: '1257,285 1235,230 1210,200 1187,182 1120,178 1072,157 1036,151 1006,167 965,168 946,178 933,200 898,212 888,205 876,172' },
];

const outline = () => SHEETS.flatMap(s => s.pts.split(' ').map(p => {
  const [x, y] = p.split(',').map(Number);
  return `${(s.x + x / s.sx).toFixed(1)},${(s.y + y / s.sy).toFixed(1)}`;
})).join(' ');

class AmMap extends AmElement {
  template() {
    return `
      <style>
        :host {
          display: grid; grid-template: minmax(0, 1fr) 20px / minmax(0, 1fr) 18px; column-gap: 2px;
          border: solid #828282; border-width: 2px 0 0 3px; background: #f0f0f0;
        }
        .map { background: #fdfefe; min-height: 0; }
        svg { display: block; width: 100%; height: 100%; }
        .bottom { display: flex; align-items: center; padding-right: 1px; }
        button { display: flex; align-items: center; justify-content: center; width: 21px; height: 19px; padding: 0; border: 0; background: none; }
        button.on { background: #bfdcf5; }
        button am-icon { width: 12px; height: 12px; }
        am-sep { margin: 0 6px 0 4px; }
      </style>
      <div class="map">
        <svg viewBox="0 0 850 850" preserveAspectRatio="xMinYMin meet"><polygon points="${outline()}" fill="#eaf6d1" stroke="#6e6e6e"/></svg>
      </div>
      <am-scrollbar from="4" to="96"></am-scrollbar>
      <div class="bottom">
        <button class="on" aria-label="Data view"><am-icon name="dataview"></am-icon></button>
        <button aria-label="Layout view"><am-icon name="pageview"></am-icon></button>
        <am-sep></am-sep>
        <button aria-label="Refresh"><am-icon name="refresh"></am-icon></button>
        <button aria-label="Pause drawing"><am-icon name="pause"></am-icon></button>
        <am-scrollbar horizontal from="4" to="96"></am-scrollbar>
      </div>
    `;
  }
}
customElements.define('am-map', AmMap);

const ITEMS = [
  'OE.CUSTOMERS_VIEW', 'OE.DEPARTMENTS', 'OE.EMPLOYEES', 'OE.INVENTORIES', 'OE.JOB_HISTORY', 'OE.JOBS',
  'OE.LOCATIONS', 'OE.OC_CORPORATE_CUSTOMERS', 'OE.OC_CUSTOMERS', 'OE.OC_INVENTORIES', 'OE.OC_ORDERS',
  'OE.OC_PRODUCT_INFORMATION', 'OE.ORDER_ITEMS', 'OE.ORDERS', 'OE.ORDERS_VIEW', 'OE.PRODUCT_DESCRIPTIONS',
  'OE.PRODUCT_INFORMATION', 'OE.PRODUCT_PRICES', 'OE.PRODUCTS', 'OE.PROMOTIONS', 'OE.PURCHASEORDER',
  'OE.SYDNEY_INVENTORY', 'OE.TORONTO_INVENTORY', 'OE.WAREHOUSES', 'PM.ONLINE_MEDIA', 'PM.PRINT_MEDIA',
  'SCOTT.BONUS', 'SCOTT.DEPT', 'SCOTT.EMP', 'SCOTT.SALGRADE', 'SDE.jiangxia', 'SH.CAL_MONTH_SALES_MV',
  'SH.CHANNELS', 'SH.COSTS', 'SH.COUNTRIES',
];
const ITEM_ICONS = { 'OE.WAREHOUSES': 'view', 'SDE.jiangxia': 'feature' };

class AmCatalog extends AmElement {
  template() {
    const rows = ITEMS.map(name => `
      <li><am-icon name="${ITEM_ICONS[name] || 'table'}"></am-icon><span${name === 'SDE.jiangxia' ? ' class="on"' : ''}>${name}</span></li>
    `).join('');
    return `
      <style>
        :host { display: flex; flex: 1; flex-direction: column; min-height: 0; --caret-width: 18px; }
        .tools { display: flex; gap: 2px; align-items: center; height: 28px; margin-top: 2px; padding-left: 4px; background: #fff; }
        .location { display: flex; align-items: center; gap: 10px; height: 33px; padding: 0 4px 0 2px; font-size: 13px; }
        am-combo { flex: 1; height: 27px; padding-left: 3px; }
        .list { display: flex; flex: 1; min-height: 0; margin-right: 5px; border: solid #828790; border-width: 2px 1px 1px 1px; background: #fff; }
        ul {
          display: grid; flex: 1; grid-template-rows: repeat(${ITEMS.length}, minmax(0, 1fr)) 5px;
          min-width: 0; margin: 0; padding: 0 0 0 76px; overflow: hidden; list-style: none;
        }
        li { display: flex; align-items: center; gap: 4px; min-height: 0; }
        li:last-child { align-items: flex-start; }
        span { padding: 0 2px; }
        .on { background: #0078d7; color: #fff; outline: 1px dotted #e08a3c; outline-offset: -1px; }
        am-scrollbar { margin-right: 2px; }
        .tabs { display: flex; height: 32px; padding: 5px 3px 0; box-sizing: border-box; background: #fafafa; border-top: 1px solid #f0f0f0; }
        .tabs button {
          display: flex; align-items: center; gap: 3px; height: 24px; padding: 0 4px; border: 1px solid #b0b0b0; border-top: 0;
          border-radius: 0 0 4px 4px; background: #f0f0f0; color: #707070; font: inherit;
        }
        .tabs button.current { border-color: #888; background: #fff; color: #000; outline: 1px dotted #333; outline-offset: -3px; }
      </style>
      <div class="tools">
        ${tools('back:caret forward up home dbhome | details:caret:dim | connect | tree | options')}
      </div>
      <div class="location">
        Location:
        <am-combo label="Location" value="SDE.jiangxia"><am-icon name="feature"></am-icon></am-combo>
      </div>
      <div class="list">
        <ul>${rows}<li><am-icon name="table"></am-icon></li></ul>
        <am-scrollbar from="50.500" to="81.500"></am-scrollbar>
      </div>
      <div class="tabs">
        <button class="current"><am-icon name="catalog"></am-icon>Catalog</button>
        <button><am-icon name="search"></am-icon>Search</button>
      </div>
    `;
  }
}
customElements.define('am-catalog', AmCatalog);

class AmStatusbar extends AmElement {
  template() {
    return `
      <style>
        :host { display: flex; position: relative; align-items: center; justify-content: flex-end; height: 27px; padding-right: 126px; white-space: pre; }
        .mark { position: absolute; right: 9px; bottom: 6px; color: #d8d8d8; text-shadow: 0 0 1px #fff; font: 15px/24px Roboto, sans-serif; }
      </style>
      <span>114.6  30.078 Decimal Degrees</span>
      <span class="mark">https://blog.csdn.net/gislaozhang</span>
    `;
  }
}
customElements.define('am-statusbar', AmStatusbar);

class AmArrow extends AmElement {
  template() {
    const [w, h] = this.getAttribute('size').split(' ');
    return `
      <style>
        :host { position: absolute; pointer-events: none; }
        svg { display: block; }
      </style>
      <svg width="${w}" height="${h}"><polygon points="${this.getAttribute('points')}" fill="#fd3936"/></svg>
    `;
  }
}
customElements.define('am-arrow', AmArrow);

class AmApp extends AmElement {
  template() {
    return `
      <style>
        :host {
          display: flex; position: relative; flex-direction: column; height: 100vh; overflow: hidden;
          background: linear-gradient(90deg, #f0f0f0, #fbfbfb) no-repeat 0 0 / 100% 129px, #f0f0f0;
        }
        main { display: grid; flex: 1; grid-template: minmax(0, 1fr) / 279px minmax(0, 1fr) minmax(320px, 756px); min-height: 0; }
        am-map { margin: 0 8px 1px 4px; }
        .toc { left: 115px; top: 257px; }
        .item { left: 1373px; top: 762px; }
      </style>
      <am-titlebar></am-titlebar>
      <am-menubar></am-menubar>
      <am-toolbars></am-toolbars>
      <main>
        <am-panel heading="Table Of Contents"><am-contents></am-contents></am-panel>
        <am-map></am-map>
        <am-panel active heading="Catalog"><am-catalog></am-catalog></am-panel>
      </main>
      <am-statusbar></am-statusbar>
      <am-ime></am-ime>
      <am-arrow class="toc" size="183 142" points="0,0 18,4 16,8 110,81 182,141 104,85 12,12 8,16"></am-arrow>
      <am-arrow class="item" size="201 107" points="0,105 11,90 14,95 110,44 199,0 112,51 16,99 18,103"></am-arrow>
    `;
  }
}
customElements.define('am-app', AmApp);
</script>
</body>
</html>
